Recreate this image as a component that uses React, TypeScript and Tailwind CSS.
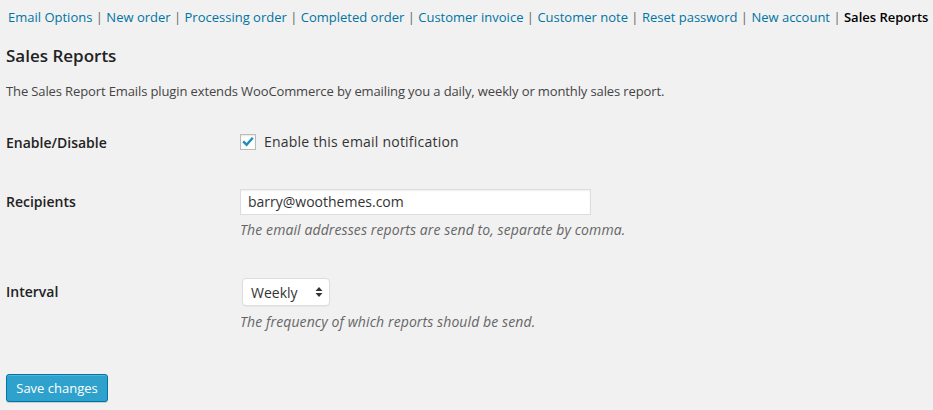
import React from "react";

const navItems = [
  "Email Options",
  "New order",
  "Processing order",
  "Completed order",
  "Customer invoice",
  "Customer note",
  "Reset password",
  "New account",
];

export default function App() {
  return (
    <div
      className="w-[933px] h-[410px] overflow-hidden bg-[#f1f1f1] pl-[6px] text-[13px] text-[#444]"
      style={{ fontFamily: '"Open Sans", sans-serif' }}
    >
      <div className="pt-[8px] pl-[2px] leading-[18px] whitespace-nowrap text-[#666]">
        {navItems.map((n) => (
          <span key={n}>
            <a className="text-[#0074a2]">{n}</a>
            {" "}|{" "}
          </span>
        ))}
        <span className="font-semibold text-black">Sales Reports</span>
      </div>

      <h3 className="mt-[18px] text-[17px] leading-[23px] font-semibold text-[#222]">Sales Reports</h3>

      <p className="mt-[15px] leading-[18px] text-[#444] tracking-[-0.12px] whitespace-nowrap">
        The Sales Report Emails plugin extends WooCommerce by emailing you a daily, weekly or monthly sales report.
      </p>

      {/* Enable/Disable */}
      <div className="mt-[31px] flex items-start">
        <div className="w-[234px] pt-[2px] text-[14px] leading-[20px] font-semibold text-[#222]">Enable/Disable</div>
        <label className="flex items-center h-[20px] text-[14px] text-[#333]">
          <span className="w-[16px] h-[16px] bg-white border border-[#bbb] shadow-[inset_0_1px_2px_rgba(0,0,0,0.1)] flex items-center justify-center mt-[2px]">
            <svg width="12" height="12" viewBox="0 0 12 12">
              <path d="M2 6.2 L4.6 8.8 L10 2.6" fill="none" stroke="#1e8cbe" strokeWidth="2.4" strokeLinecap="square" strokeLinejoin="miter" />
            </svg>
          </span>
          <span className="ml-[8px] tracking-[0.22px]">Enable this email notification</span>
        </label>
      </div>

      {/* Recipients */}
      <div className="mt-[36px] flex items-start">
        <div className="w-[234px] text-[14px] leading-[26px] font-semibold text-[#222]">Recipients</div>
        <div className="flex flex-col">
          <div className="w-[351px] h-[26px] bg-white border border-[#ddd] shadow-[inset_0_1px_2px_rgba(0,0,0,0.07)] pl-[7px] text-[14px] leading-[24px] text-[#333]">
            barry@woothemes.com
          </div>
          <div className="mt-[5px] italic text-[14px] leading-[20px] text-[#666] tracking-[0.1px] whitespace-nowrap">
            The email addresses reports are send to, separate by comma.
          </div>
        </div>
      </div>

      {/* Interval */}
      <div className="mt-[38px] flex items-start">
        <div className="w-[234px] text-[14px] leading-[28px] font-semibold text-[#222]">Interval</div>
        <div className="flex flex-col">
          <div className="ml-[2px] w-[88px] h-[28px] bg-white border border-[#ddd] rounded-[4px] shadow-[0_1px_1px_rgba(0,0,0,0.04)] flex items-center justify-between pl-[8px] pr-[6px] text-[14px] text-[#333]">
            <span>Weekly</span>
            <svg width="8" height="12" viewBox="0 0 8 12">
              <path d="M4 1 L7.5 5 L0.5 5 Z" fill="#333" />
              <path d="M4 11 L7.5 7 L0.5 7 Z" fill="#333" />
            </svg>
          </div>
          <div className="mt-[6px] italic text-[14px] leading-[20px] text-[#666] tracking-[0.1px] whitespace-nowrap">
            The frequency of which reports should be send.
          </div>
        </div>
      </div>

      <button className="mt-[42px] w-[102px] h-[28px] bg-[#2ea2cc] border border-[#0074a2] rounded-[3px] shadow-[inset_0_1px_0_rgba(120,200,230,0.5),0_1px_0_rgba(0,0,0,0.15)] text-white text-[13px] leading-[26px] block">
        Save changes
      </button>
    </div>
  );
}
